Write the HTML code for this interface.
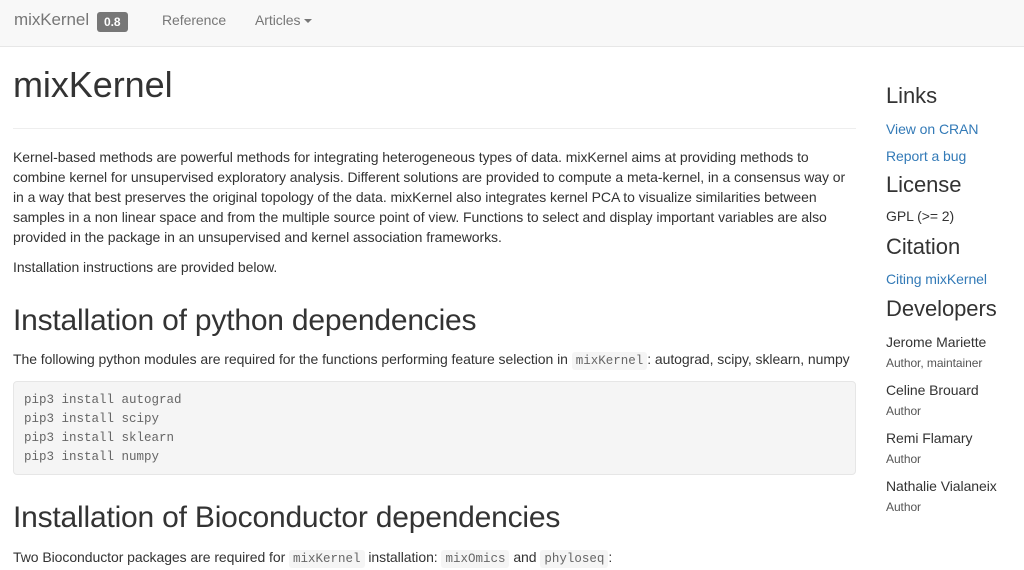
<!DOCTYPE html>
<html><head><meta charset="utf-8"><style>
*{margin:0;padding:0;box-sizing:border-box}
body{width:1024px;height:570px;overflow:hidden;background:#fff;font-family:"Liberation Sans",Arial,sans-serif;font-size:14px;line-height:20px;color:#333;position:relative;letter-spacing:-0.06px}
.nav{position:absolute;left:0;top:0;width:1024px;height:47px;background:#f8f8f8;border-bottom:1px solid #e7e7e7}
.nav span{position:absolute;top:10px;color:#777;font-size:14px}
.abs{position:absolute;white-space:nowrap}
h1{font-weight:500;font-size:36px;line-height:40px;color:#333}
h2{font-weight:500;font-size:30px;line-height:34px;color:#333;letter-spacing:-0.2px}
h3{font-weight:500;font-size:22px;line-height:26px;color:#333}
a{color:#337ab7;text-decoration:none}
code{font-family:"Liberation Mono",monospace;font-size:12.5px;background:#f5f5f5;color:#666;padding:2px 4px;border-radius:3px;letter-spacing:0}
pre.abs{white-space:pre;font-family:"Liberation Mono",monospace;font-size:12.5px;line-height:19px;color:#666;background:#f5f5f5;border:1px solid #e6e6e6;border-radius:4px;padding:9px 10px;letter-spacing:0}
small{font-size:12px;color:#555}
</style></head><body>
<div class="nav">
<span style="left:14px;font-size:17px;top:10px">mixKernel</span>
<span style="left:97px;top:12px;background:#777;color:#fff;font-weight:bold;font-size:12px;line-height:14px;padding:3px 7px;border-radius:3px">0.8</span>
<span style="left:162px;top:10px">Reference</span>
<span style="left:255px;top:10px">Articles <span style="position:static;display:inline-block;width:0;height:0;border-left:4px solid transparent;border-right:4px solid transparent;border-top:4px solid #777;vertical-align:middle"></span></span>
</div>
<h1 class="abs" style="left:13px;top:65px">mixKernel</h1>
<div class="abs" style="left:13px;top:128px;width:843px;border-top:1px solid #eee"></div>
<p class="abs" style="left:13px;top:147px">Kernel-based methods are powerful methods for integrating heterogeneous types of data. mixKernel aims at providing methods to<br>combine kernel for unsupervised exploratory analysis. Different solutions are provided to compute a meta-kernel, in a consensus way or<br>in a way that best preserves the original topology of the data. mixKernel also integrates kernel PCA to visualize similarities between<br>samples in a non linear space and from the multiple source point of view. Functions to select and display important variables are also<br>provided in the package in an unsupervised and kernel association frameworks.</p>
<p class="abs" style="left:13px;top:257px">Installation instructions are provided below.</p>
<h2 class="abs" style="left:13px;top:304px">Installation of python dependencies</h2>
<p class="abs" style="left:13px;top:349px">The following python modules are required for the functions performing feature selection in <code>mixKernel</code>: autograd, scipy, sklearn, numpy</p>
<pre class="abs" style="left:13px;top:381px;width:843px;height:94px">pip3 install autograd
pip3 install scipy
pip3 install sklearn
pip3 install numpy</pre>
<h2 class="abs" style="left:13px;top:501px">Installation of Bioconductor dependencies</h2>
<p class="abs" style="left:13px;top:547px">Two Bioconductor packages are required for <code>mixKernel</code> installation: <code>mixOmics</code> and <code>phyloseq</code>:</p>
<div class="abs" style="left:886px;top:83px;width:140px">
<h3>Links</h3>
<div style="margin-top:7px;line-height:27px"><a>View on CRAN</a><br><a>Report a bug</a></div>
<h3 style="margin-top:2px">License</h3>
<div style="margin-top:5px;line-height:27px">GPL (&gt;= 2)</div>
<h3 style="margin-top:4px">Citation</h3>
<div style="margin-top:6px;line-height:27px"><a>Citing mixKernel</a></div>
<h3 style="margin-top:3px">Developers</h3>
<div style="margin-top:10px;line-height:20px">
<div>Jerome Mariette<br><small>Author, maintainer</small></div>
<div style="margin-top:7px">Celine Brouard<br><small>Author</small></div>
<div style="margin-top:7px">Remi Flamary<br><small>Author</small></div>
<div style="margin-top:7px">Nathalie Vialaneix<br><small>Author</small></div>
</div></div>
</body></html>
